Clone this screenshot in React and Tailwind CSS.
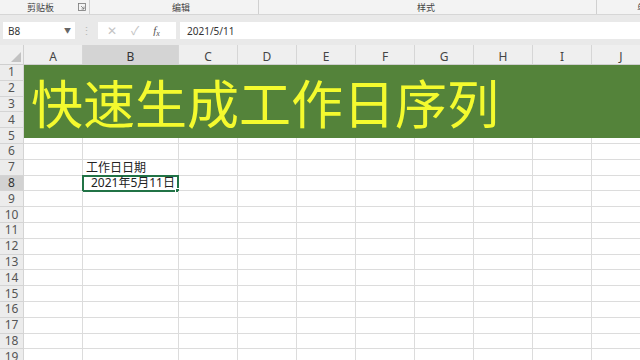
import React from 'react';

const COLS = [
  { k: 'A', w: 59 },
  { k: 'B', w: 96 },
  { k: 'C', w: 59 },
  { k: 'D', w: 59 },
  { k: 'E', w: 59 },
  { k: 'F', w: 59 },
  { k: 'G', w: 59 },
  { k: 'H', w: 59 },
  { k: 'I', w: 59 },
  { k: 'J', w: 59 },
];

const FONT = { fontFamily: '"Noto Sans", "Noto Sans CJK SC", sans-serif' };

function RowHead({ n, active }) {
  return (
    <div className={`w-[24px] shrink-0 h-full flex items-center justify-center border-r border-b border-[#d4d4d4] text-[12px] leading-none ${active ? 'bg-[#d2d2d2] text-[#333]' : 'bg-[#ececec] text-[#555]'}`}>
      {n}
    </div>
  );
}

function Row({ n }) {
  return (
    <div className="flex h-[15.8px]">
      <RowHead n={n} active={n === 8} />
      {COLS.map(c => (
        <div key={c.k} style={{ width: c.w }}
          className="shrink-0 h-full border-r border-b border-[#dcdcdc] relative text-[12px] leading-none text-[#222]">
          {n === 7 && c.k === 'B' && (
            <span className="absolute left-[3px] top-[2px] whitespace-nowrap">工作日日期</span>
          )}
          {n === 8 && c.k === 'B' && (
            <div className="absolute -left-px -top-px w-[97px] h-[17.8px] border-2 border-[#217346] flex items-center justify-end pr-[2px] whitespace-nowrap">
              2021年5月11日
              <span className="absolute -right-[3px] -bottom-[3px] w-[5px] h-[5px] bg-[#217346] border border-white" />
            </div>
          )}
        </div>
      ))}
    </div>
  );
}

export default function App() {
  const rows = [];
  for (let i = 6; i <= 22; i++) rows.push(i);

  return (
    <div className="w-[640px] h-[360px] overflow-hidden bg-white select-none" style={FONT}>
      {/* ribbon group labels */}
      <div className="flex h-[15px] bg-[#f3f3f3] border-b border-[#d6d6d6] text-[9px] text-[#444] leading-none">
        <div className="w-[90px] shrink-0 flex items-center border-r border-[#d0d0d0] relative">
          <span className="ml-[27px]">剪贴板</span>
          <svg className="ml-auto mr-[3px]" width="8" height="8" viewBox="0 0 8 8">
            <rect x="0.5" y="0.5" width="7" height="7" fill="none" stroke="#777" strokeWidth="0.8" />
            <path d="M3 3 L6 6 M6 3.5 V6 H3.5" fill="none" stroke="#777" strokeWidth="0.8" />
          </svg>
        </div>
        <div className="w-[169px] shrink-0 flex items-center justify-center border-r border-[#d0d0d0]">
          <span className="ml-[14px]">编辑</span>
        </div>
        <div className="w-[338px] shrink-0 flex items-center justify-center border-r border-[#d0d0d0]">
          <span className="-ml-[3px]">样式</span>
        </div>
        <div className="flex-1 flex items-center justify-end overflow-hidden">
          <span className="mr-[-6px]">单</span>
        </div>
      </div>

      {/* formula bar */}
      <div className="h-[30px] bg-[#e9e9e9] flex items-center pt-[1px]">
        <div className="ml-[3px] w-[72px] h-[17px] bg-white flex items-center text-[10px] text-[#333] leading-none">
          <span className="ml-[5px]">B8</span>
          <span className="ml-auto mr-[4px] text-[7px] text-[#666]">▼</span>
        </div>
        <div className="w-[23px] flex justify-center text-[#b8b8b8] text-[11px] leading-none">⋮</div>
        <div className="w-[78px] h-[17px] bg-white flex items-center text-[12px] leading-none">
          <span className="ml-[9px] text-[#c4c4c4]">✕</span>
          <span className="ml-[14px] text-[#c4c4c4]">✓</span>
          <span className="ml-[14px] text-[#555] italic text-[11px]" style={{ fontFamily: '"Liberation Serif", serif' }}>f<sub className="text-[8px]">x</sub></span>
        </div>
        <div className="ml-[4px] flex-1 h-[17px] bg-white flex items-center text-[10px] text-[#333] leading-none">
          <span className="ml-[7px]">2021/5/11</span>
        </div>
      </div>

      {/* column headers */}
      <div className="flex h-[20px] bg-[#efefef] border-b border-[#cfcfcf]">
        <div className="w-[24px] shrink-0 h-full border-r border-[#d0d0d0] flex items-end justify-end pr-[2px] pb-[2px]">
          <svg width="10" height="10" viewBox="0 0 10 10"><path d="M10 0 L10 10 L0 10 Z" fill="#c2c2c2" /></svg>
        </div>
        {COLS.map(c => (
          <div key={c.k} style={{ width: c.w }}
            className={`shrink-0 h-full flex items-center justify-center pt-[5px] text-[12px] leading-none border-r border-[#d6d6d6] ${c.k === 'B' ? 'bg-[#d4d4d4] text-[#333]' : 'text-[#444]'}`}>
            {c.k}
          </div>
        ))}
      </div>

      {/* rows 1-5 with merged title */}
      <div className="flex h-[79px]">
        <div className="w-[24px] shrink-0 flex flex-col">
          {[1, 2, 3, 4, 5].map(n => (
            <div key={n} className="h-[15.8px]"><RowHead n={n} /></div>
          ))}
        </div>
        <div className="flex-1 flex flex-col border-b border-[#dcdcdc]">
          <div className="h-[73px] bg-[#54833a] flex items-center pl-[7px] text-[#f4fa2e] text-[52px] leading-none whitespace-nowrap"
            style={{ fontFamily: '"Noto Sans CJK SC", sans-serif' }}>
            快速生成工作日序列
          </div>
          <div className="flex-1 flex">
            {COLS.map(c => (
              <div key={c.k} style={{ width: c.w }} className="shrink-0 border-r border-[#dcdcdc]" />
            ))}
          </div>
        </div>
      </div>

      {rows.map(n => <Row key={n} n={n} />)}
    </div>
  );
}
